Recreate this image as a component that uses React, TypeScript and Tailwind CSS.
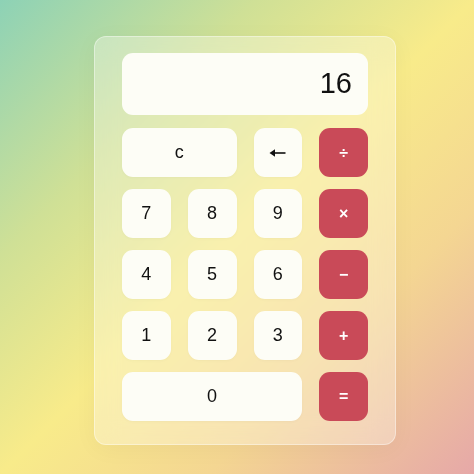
import type { ReactNode } from "react";

function BackArrow() {
  return (
    <svg width="17" height="10" viewBox="0 0 17 10" fill="none">
      <path d="M4 5H16.5" stroke="#111" strokeWidth="1.6" />
      <path d="M0.5 5L6 1.2V8.8Z" fill="#111" />
    </svg>
  );
}

const keys: { id: string; label: ReactNode; span?: string; op?: boolean }[] = [
  { id: "c", label: "c", span: "col-span-2" },
  { id: "back", label: <BackArrow /> },
  { id: "div", label: "÷", op: true },
  { id: "7", label: "7" },
  { id: "8", label: "8" },
  { id: "9", label: "9" },
  { id: "mul", label: "×", op: true },
  { id: "4", label: "4" },
  { id: "5", label: "5" },
  { id: "6", label: "6" },
  { id: "sub", label: "−", op: true },
  { id: "1", label: "1" },
  { id: "2", label: "2" },
  { id: "3", label: "3" },
  { id: "add", label: "+", op: true },
  { id: "0", label: "0", span: "col-span-3" },
  { id: "eq", label: "=", op: true },
];

export default function App() {
  return (
    <div
      className="min-h-screen w-full pl-[94px] pt-[36px] bg-[linear-gradient(135deg,#8dd2b6_0%,#cfe096_27%,#f8eb8a_50%,#f4d692_72%,#e6a8a8_100%)]"
      style={{ fontFamily: '"Liberation Sans", Arial, sans-serif' }}
    >
      <div className="w-[302px] rounded-[12px] border border-white/40 bg-white/30 px-[27px] pt-[16px] pb-[23px] shadow-[0_4px_24px_rgba(0,0,0,0.04)] backdrop-blur-md">
        <div className="flex h-[62px] items-center justify-end rounded-[11px] bg-[#fdfdf6] pr-[16px] text-[29px] text-[#111]">
          16
        </div>
        <div className="mt-[13px] grid grid-cols-4 gap-x-[17px] gap-y-[12px]">
          {keys.map((k) => (
            <button
              key={k.id}
              className={
                "flex h-[49px] items-center justify-center rounded-[11px] " +
                (k.span ?? "") +
                (k.op
                  ? " bg-[#c94a58] text-[16px] font-bold text-white"
                  : " bg-[#fdfdf6] text-[18px] text-[#111] shadow-[0_1px_3px_rgba(0,0,0,0.03)]")
              }
            >
              {k.label}
            </button>
          ))}
        </div>
      </div>
    </div>
  );
}
